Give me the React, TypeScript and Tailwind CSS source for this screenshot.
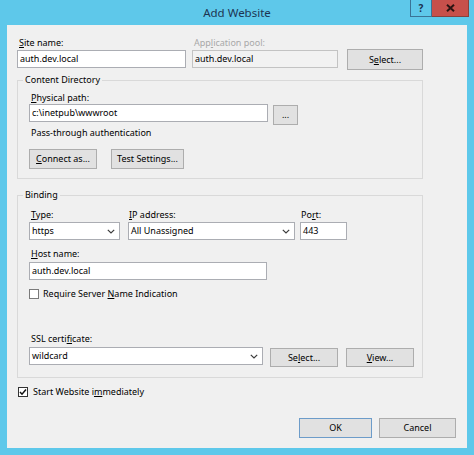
import React from "react";

function U({ children }: { children: React.ReactNode }) {
  return <span className="underline decoration-1 underline-offset-1">{children}</span>;
}

function Label({ children, className = "" }: { children: React.ReactNode; className?: string }) {
  return <div className={"h-[12px] leading-[12px] whitespace-nowrap " + className}>{children}</div>;
}

function TextBox({ w, value, readOnly = false, className = "" }: { w: string; value: string; readOnly?: boolean; className?: string }) {
  return (
    <div
      className={
        "h-[18px] flex items-center pl-[2px] border whitespace-nowrap " +
        (readOnly ? "bg-[#f2f2f2] border-[#c3c3c3] " : "bg-white border-[#abadb3] ") +
        w +
        " " +
        className
      }
    >
      {value}
    </div>
  );
}

function Chevron() {
  return (
    <svg width="8" height="5" viewBox="0 0 8 5" className="shrink-0">
      <polyline points="0.8,0.8 4,4 7.2,0.8" fill="none" stroke="#3c3c3c" strokeWidth="1.2" />
    </svg>
  );
}

function Combo({ w, value, className = "" }: { w: string; value: string; className?: string }) {
  return (
    <div className={"h-[18px] flex items-center justify-between pl-[2px] pr-[4px] border bg-white border-[#abadb3] whitespace-nowrap " + w + " " + className}>
      <span>{value}</span>
      <Chevron />
    </div>
  );
}

function Btn({ w, h = "h-[20px]", children, def = false, className = "" }: { w: string; h?: string; children: React.ReactNode; def?: boolean; className?: string }) {
  return (
    <div
      className={
        "flex items-center justify-center bg-[#e1e1e1] border whitespace-nowrap " +
        (def ? "border-[#6d9cc9] " : "border-[#adadad] ") +
        w +
        " " +
        h +
        " " +
        className
      }
    >
      {children}
    </div>
  );
}

function CheckBox({ checked, dark }: { checked: boolean; dark: boolean }) {
  return (
    <div className={"w-[10px] h-[10px] bg-white border flex items-center justify-center " + (dark ? "border-[#333333]" : "border-[#7a7a7a]")}>
      {checked && (
        <svg width="8" height="8" viewBox="0 0 8 8">
          <polyline points="1,4 3,6.2 7,1.4" fill="none" stroke="#111" strokeWidth="1.5" />
        </svg>
      )}
    </div>
  );
}

export default function App() {
  return (
    <div className="w-[474px] h-[455px] bg-[#5ec8ea] flex flex-col font-['Noto_Sans',sans-serif] text-[9px] leading-[12px] text-black">
      {/* Title bar */}
      <div className="relative h-[25px] shrink-0 flex items-center justify-center">
        <span className="text-[11.5px] leading-[14px] text-[#1d3552]">Add Website</span>
        <div className="absolute top-0 right-[5px] flex">
          <div className="w-[22px] h-[17px] border border-[#3a7396] border-t-0 flex items-center justify-center text-[10px] font-bold text-[#1b3050] leading-none">
            ?
          </div>
          <div className="w-[37px] h-[17px] bg-[#c7504b] border border-[#86413d] border-t-0 border-l-0 flex items-center justify-center">
            <svg width="9" height="8" viewBox="0 0 9 8">
              <path d="M1 0.8 L8 7.2 M8 0.8 L1 7.2" stroke="#2a1412" strokeWidth="2" fill="none" />
            </svg>
          </div>
        </div>
      </div>

      {/* Client */}
      <div className="mx-[7px] h-[423px] bg-[#f0f0f0] flex flex-col pt-[12px] pl-[10px]">
        {/* Row 1 */}
        <div className="flex items-start">
          <div className="flex flex-col w-[169px]">
            <Label className="ml-[2px]">
              <U>S</U>ite name:
            </Label>
            <TextBox w="w-[169px]" value="auth.dev.local" className="mt-[1px]" />
          </div>
          <div className="flex flex-col w-[146px] ml-[6px]">
            <Label className="ml-[2px] text-[#a8a8a8]">
              App<U>l</U>ication pool:
            </Label>
            <TextBox w="w-[146px]" value="auth.dev.local" readOnly className="mt-[1px]" />
          </div>
          <Btn w="w-[76px]" h="h-[21px]" className="ml-[9px] mt-[12px]">
            S<U>e</U>lect...
          </Btn>
        </div>

        {/* Content Directory */}
        <fieldset className="mt-[4px] w-[406px] border border-[#d9d9d9] p-0 m-0">
          <legend className="ml-[5px] px-[2px] h-[12px] leading-[12px]">Content Directory</legend>
          <div className="flex flex-col pl-[11px] pt-[6px] pb-[9px]">
            <Label className="ml-[2px]">
              <U>P</U>hysical path:
            </Label>
            <div className="flex items-start">
              <TextBox w="w-[239px]" value="c:\inetpub\wwwroot" />
              <Btn w="w-[25px]" className="ml-[5px] mt-[1px]">
                ...
              </Btn>
            </div>
            <Label className="ml-[2px] mt-[2px]">Pass-through authentication</Label>
            <div className="flex mt-[10px]">
              <Btn w="w-[68px]">
                <U>C</U>onnect as...
              </Btn>
              <Btn w="w-[73px]" className="ml-[14px]">
                Test Settings...
              </Btn>
            </div>
          </div>
        </fieldset>

        {/* Binding */}
        <fieldset className="mt-[10px] w-[406px] border border-[#d9d9d9] p-0 m-0">
          <legend className="ml-[5px] px-[2px] h-[12px] leading-[12px]">Binding</legend>
          <div className="flex flex-col pl-[11px] pt-[8px] pb-[10px]">
            <div className="flex items-start">
              <div className="flex flex-col w-[91px]">
                <Label className="ml-[2px]">
                  <U>T</U>ype:
                </Label>
                <Combo w="w-[91px]" value="https" className="mt-[1px]" />
              </div>
              <div className="flex flex-col w-[167px] ml-[8px]">
                <Label className="ml-[1px]">
                  <U>I</U>P address:
                </Label>
                <Combo w="w-[167px]" value="All Unassigned" className="mt-[1px]" />
              </div>
              <div className="flex flex-col w-[47px] ml-[5px]">
                <Label className="ml-[1px]">
                  Po<U>r</U>t:
                </Label>
                <TextBox w="w-[47px]" value="443" className="mt-[1px]" />
              </div>
            </div>
            <Label className="ml-[2px] mt-[8px]">
              <U>H</U>ost name:
            </Label>
            <TextBox w="w-[238px]" value="auth.dev.local" className="mt-[2px]" />
            <div className="flex items-center mt-[8px] h-[12px]">
              <CheckBox checked={false} dark={false} />
              <span className="ml-[4px]">
                Require Server <U>N</U>ame Indication
              </span>
            </div>
            <Label className="ml-[2px] mt-[33px]">
              SSL certi<U>f</U>icate:
            </Label>
            <div className="flex items-start mt-[2px]">
              <Combo w="w-[234px]" value="wildcard" />
              <Btn w="w-[68px]" h="h-[19px]" className="ml-[7px] mt-[1px]">
                Se<U>l</U>ect...
              </Btn>
              <Btn w="w-[68px]" h="h-[19px]" className="ml-[8px] mt-[1px]">
                <U>V</U>iew...
              </Btn>
            </div>
          </div>
        </fieldset>

        {/* Start website */}
        <div className="flex items-center mt-[8px] ml-[1px] h-[12px]">
          <CheckBox checked={true} dark={true} />
          <span className="ml-[5px]">
            Start Website i<U>m</U>mediately
          </span>
        </div>

        {/* OK / Cancel */}
        <div className="mt-auto flex justify-end pr-[11px] pb-[10px]">
          <Btn w="w-[73px]" def>
            OK
          </Btn>
          <Btn w="w-[77px]" className="ml-[7px]">
            Cancel
          </Btn>
        </div>
      </div>
    </div>
  );
}
